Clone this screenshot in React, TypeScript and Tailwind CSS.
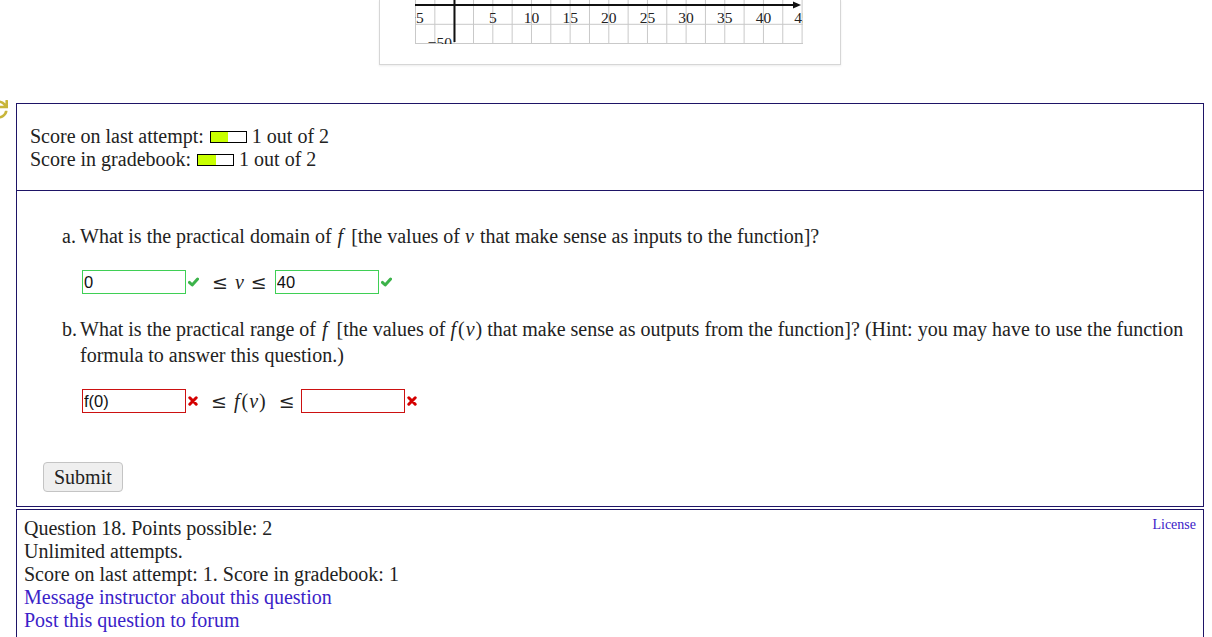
import React from "react";
import { FaSync } from "react-icons/fa";

const serif = { fontFamily: '"Liberation Serif", "Times New Roman", serif' };
const mathRel = { fontFamily: '"DejaVu Serif", "Liberation Serif", serif' };

const Graph: React.FC = () => {
  const step = 19.33;
  const cols = Array.from({ length: 21 }, (_, k) => 0.5 + k * step);
  const labels: [number, string][] = [
    [0, "−5"],
    [4, "5"],
    [6, "10"],
    [8, "15"],
    [10, "20"],
    [12, "25"],
    [14, "30"],
    [16, "35"],
    [18, "40"],
    [20, "45"],
  ];
  return (
    <svg width="388" height="44" viewBox="0 0 388 44" className="block">
      {cols.map((x, i) => (
        <line key={i} x1={x} y1={0} x2={x} y2={44} stroke="#c9c9c9" strokeWidth={1} />
      ))}
      <line x1={0} y1={24.3} x2={388} y2={24.3} stroke="#c9c9c9" strokeWidth={1} />
      <line x1={0} y1={43.5} x2={388} y2={43.5} stroke="#c9c9c9" strokeWidth={1} />
      {labels.map(([k, t]) => (
        <text
          key={t}
          x={0.5 + k * step}
          y={23}
          textAnchor="middle"
          fontSize="15.5"
          fill="#222"
          style={serif}
        >
          {t}
        </text>
      ))}
      <text x={37} y={48} textAnchor="end" fontSize="15.5" fill="#222" style={serif}>
        −50
      </text>
      <line x1={0} y1={5} x2={379} y2={5} stroke="#111" strokeWidth={2} />
      <polygon points="378,1.5 386,5 378,8.5" fill="#111" />
      <line x1={39.5} y1={0} x2={39.5} y2={42} stroke="#111" strokeWidth={2} />
    </svg>
  );
};

const Check: React.FC = () => (
  <svg width="11" height="10" viewBox="0 0 11 10" className="inline-block">
    <path d="M1.4 5.4 L4.2 8 L9.6 2" fill="none" stroke="#3cb34a" strokeWidth={3} strokeLinecap="round" strokeLinejoin="round" />
  </svg>
);

const Cross: React.FC = () => (
  <svg width="10" height="10" viewBox="0 0 10 10" className="inline-block">
    <path d="M1.8 1.8 L8.2 8.2 M8.2 1.8 L1.8 8.2" fill="none" stroke="#d40000" strokeWidth={3} strokeLinecap="round" />
  </svg>
);

const Bar: React.FC = () => (
  <span className="inline-flex w-[37px] h-[12px] border border-black ml-[6px] mr-[5px] bg-white">
    <span className="w-1/2 h-full bg-[#c8ff00]" />
  </span>
);

const Answer: React.FC<{ value: string; ok: boolean }> = ({ value, ok }) => (
  <span className="inline-flex items-center">
    <input
      readOnly
      value={value}
      className={`w-[104px] h-[24px] px-[1px] border outline-none text-[16.5px] text-[#111] ${
        ok ? "border-[#3fcf55]" : "border-[#cc1111]"
      }`}
      style={{ fontFamily: '"Liberation Sans", Arial, sans-serif' }}
    />
    <span className="ml-[2px] flex items-center">{ok ? <Check /> : <Cross />}</span>
  </span>
);

const Le: React.FC<{ className?: string }> = ({ className }) => (
  <span className={`text-[19px] ${className ?? ""}`} style={mathRel}>
    ≤
  </span>
);

const Fv: React.FC = () => (
  <span className="inline-flex">
    <i className="mr-[2px]">f</i>
    <span className="mr-[1px]">(</span>
    <i className="mr-[1px]">v</i>
    <span>)</span>
  </span>
);

const App: React.FC = () => {
  return (
    <div className="bg-white min-h-[637px] text-[20px] leading-[23px] text-[#222] overflow-hidden relative" style={serif}>
      <div className="w-[1188px] ml-[16px]">
        <div className="w-[462px] mx-auto border border-t-0 border-[#d6d6d6] shadow-[0_1px_2px_rgba(0,0,0,0.08)] pl-[35px] pb-[20px]">
          <Graph />
        </div>
      </div>

      <div className="absolute left-[-11px] top-[100px] text-[#c8b53a]">
        <FaSync size={19} />
      </div>

      <div className="w-[1188px] ml-[16px] mt-[38px] border border-[#1e1466]">
        <div className="pt-[21px] pb-[19px] pl-[13px] border-b border-[#1e1466]">
          <div className="flex items-center">
            Score on last attempt:
            <Bar />1 out of 2
          </div>
          <div className="flex items-center">
            Score in gradebook:
            <Bar />1 out of 2
          </div>
        </div>

        <div className="pt-[34px] pb-[14px] pl-[45px] pr-[10px]">
          <div className="flex">
            <span className="w-[18px] shrink-0">a.</span>
            <div className="flex-1">
              <p>
                What is the practical domain of <i className="mx-[1px] pr-[2px]">f</i> [the values of{" "}
                <i className="pr-[1px]">v</i> that make sense as inputs to the function]?
              </p>
              <div className="mt-[22px] h-[24px] flex items-center ml-[2px]">
                <Answer value="0" ok />
                <Le className="ml-[13px]" />
                <i className="ml-[7px]">v</i>
                <Le className="ml-[7px]" />
                <span className="ml-[8px]">
                  <Answer value="40" ok />
                </span>
              </div>
            </div>
          </div>

          <div className="flex mt-[22px]">
            <span className="w-[18px] shrink-0 leading-[26px]">b.</span>
            <div className="flex-1">
              <p className="leading-[26px]">
                What is the practical range of <i className="mx-[1px] pr-[3px]">f</i> [the values of <Fv /> that make
                sense as outputs from the function]? (Hint: you may have to use the function formula to answer this
                question.)
              </p>
              <div className="mt-[21px] h-[24px] flex items-center ml-[2px]">
                <Answer value="f(0)" ok={false} />
                <Le className="ml-[13px]" />
                <span className="ml-[7px]">
                  <Fv />
                </span>
                <Le className="ml-[13px]" />
                <span className="ml-[6px]">
                  <Answer value="" ok={false} />
                </span>
              </div>
            </div>
          </div>

          <button
            className="mt-[49px] ml-[-19px] h-[30px] px-[10px] bg-[#efefef] border border-[#c4c4c4] rounded-[4px] text-[20px] text-[#222]"
            style={serif}
          >
            Submit
          </button>
        </div>
      </div>

      <div className="w-[1188px] ml-[16px] mt-[2px] border border-[#1e1466] pt-[7px] pl-[7px] pr-[7px] pb-[10px]">
        <a className="float-right text-[14px] leading-[16px] text-[#3a22c8] cursor-pointer">License</a>
        <div>Question 18. Points possible: 2</div>
        <div>Unlimited attempts.</div>
        <div>Score on last attempt: 1. Score in gradebook: 1</div>
        <div>
          <a className="text-[#3a22c8] cursor-pointer">Message instructor about this question</a>
        </div>
        <div>
          <a className="text-[#3a22c8] cursor-pointer">Post this question to forum</a>
        </div>
      </div>
    </div>
  );
};

export default App;
